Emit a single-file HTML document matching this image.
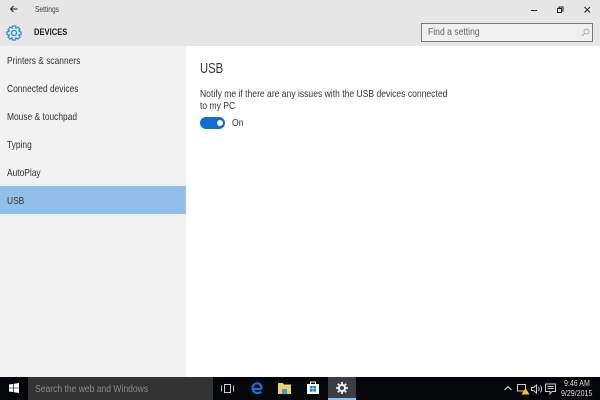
<!DOCTYPE html>
<html><head><meta charset="utf-8"><style>
html,body{margin:0;padding:0;width:600px;height:400px;overflow:hidden;background:#fff;font-family:"Liberation Sans",sans-serif}
.a{position:absolute;white-space:nowrap;line-height:12px;transform-origin:0 50%}
.n{font-size:10.5px;color:#333;left:6.5px;transform:scaleX(.8)}
.d{font-size:10.5px;color:#333;left:200px;transform:scaleX(.815)}
svg{position:absolute;overflow:visible}
</style></head><body>
<div class="a" style="left:0;top:0;width:600px;height:46px;background:#e6e6e6"></div>
<div class="a" style="left:0;top:46px;width:186px;height:331px;background:#f2f2f2"></div>
<div class="a" style="left:0;top:186px;width:186px;height:28px;background:#92c0e8"></div>
<svg style="left:10px;top:4px" width="12" height="10" fill="none" stroke="#222" stroke-width="1"><path d="M.5 5H7.500M.5 5L3.500 2M.5 5L3.500 8"/></svg>
<div class="a" style="left:35px;top:3px;font-size:8.5px;color:#444;transform:scaleX(.78)">Settings</div>
<svg style="left:6px;top:25px" width="16" height="16" viewBox="0 0 16 16" fill="none" stroke="#2b8fdc" stroke-width="1.300"><circle cx="8" cy="8" r="2.500"/><path d="M6.500 1H9.500L10 3L12 2.200L14 4.500L12.800 6L15 7V9.500L12.800 10L14 12L12 14L10 13L9.500 15H6.500L6 13L4 14L2 12L3.200 10L1 9.500V7L3.200 6L2 4.500L4 2.200L6 3Z"/></svg>
<div class="a" style="left:34px;top:27px;font-size:9.500px;font-weight:bold;color:#222;transform:scaleX(.8)">DEVICES</div>
<svg style="left:530px;top:4px" width="64" height="12" fill="none" stroke="#222" stroke-width="1"><path d="M1 6.500H7"/><path d="M27.500 4.500H31.500V8.500H27.500ZM29 4.500V3H33V7H31.500"/><path d="M54.500 3L60 8.500M60 3L54.500 8.500"/></svg>
<div class="a" style="left:421px;top:23px;width:170px;height:17px;background:#f0f0f0;border:1px solid #7a7a7a"></div>
<div class="a" style="left:428px;top:27px;font-size:10px;color:#666;transform:scaleX(.86)">Find a setting</div>
<svg style="left:581px;top:28px" width="9" height="9" fill="none" stroke="#aaa" stroke-width=".9"><circle cx="5.500" cy="3.500" r="2.500"/><path d="M3.700 5.300L1 8"/></svg>
<div class="a n" style="top:55px">Printers &amp; scanners</div>
<div class="a n" style="top:83px">Connected devices</div>
<div class="a n" style="top:111px">Mouse &amp; touchpad</div>
<div class="a n" style="top:139px">Typing</div>
<div class="a n" style="top:167px">AutoPlay</div>
<div class="a n" style="top:195px">USB</div>
<div class="a" style="left:200px;top:61px;font-size:15px;line-height:16px;color:#333;transform:scaleX(.75)">USB</div>
<div class="a d" style="top:88px">Notify me if there are any issues with the USB devices connected</div>
<div class="a d" style="top:100px">to my PC</div>
<div class="a" style="left:200px;top:117px;width:25px;height:12px;border-radius:6px;background:#0f6fcf"></div>
<div class="a" style="left:217px;top:120px;width:6px;height:6px;border-radius:3px;background:#fff"></div>
<div class="a" style="left:232px;top:117px;font-size:10.500px;color:#333;transform:scaleX(.82)">On</div>
<div class="a" style="left:0;top:377px;width:600px;height:23px;background:#05060a"></div>
<div class="a" style="left:28px;top:377px;width:185px;height:23px;background:#333"></div>
<svg style="left:9px;top:383px" width="10" height="10" fill="#fff"><path d="M0 1.500L4.300 .9V4.700H0ZM5 .8L10 0V4.700H5ZM0 5.300H4.300V9.100L0 8.500ZM5 5.300H10V10L5 9.200Z"/></svg>
<div class="a" style="left:35px;top:384px;font-size:10px;color:#8a8a8a;transform:scaleX(.855)">Search the web and Windows</div>
<svg style="left:221px;top:384px" width="13" height="9" fill="none" stroke="#ccc" stroke-width="1"><path d="M3.500 .5H9.500V8.500H3.500ZM1 2H.5V7H1M12 2H12.500V7H12"/></svg>
<svg style="left:251px;top:382px" width="12" height="12" fill="none" stroke="#0f78d4" stroke-width="2.200"><path d="M10.500 7H1.500C1.500 3.500 3.500 1.300 6 1.300C8.800 1.300 10.500 3.200 10.500 7M2 7C2 9.500 4 11 6.500 11C8 11 9.300 10.500 10.300 9.800"/></svg>
<svg style="left:278px;top:382px" width="13" height="13"><path d="M0 1H5L6 2.500H13V12H0Z" fill="#f0cf70"/><path d="M4 7H9V12H4Z" fill="#2aa5dc"/></svg>
<svg style="left:307px;top:381px" width="12" height="14"><path d="M0 3H12V13H0Z" fill="#fff"/><path d="M3.500 3V1H8.500V3" fill="none" stroke="#fff"/><path d="M3 5H5.700V7.500H3ZM6.300 5H9V7.500H6.300ZM3 8.100H5.700V10.600H3ZM6.300 8.100H9V10.600H6.300Z" fill="#0f78d4"/></svg>
<div class="a" style="left:328px;top:377px;width:28px;height:23px;background:#3a3d42"></div>
<div class="a" style="left:328px;top:398px;width:28px;height:2px;background:#8fc0e8"></div>
<svg style="left:336px;top:382px" width="12" height="12" viewBox="0 0 12 12" fill="none" stroke="#f4f4f4" stroke-width="2"><circle cx="6" cy="6" r="3"/><path d="M6 0V2M6 10V12M0 6H2M10 6H12M1.800 1.800L3.200 3.200M8.800 8.800L10.200 10.200M10.200 1.800L8.800 3.200M3.200 8.800L1.800 10.200" stroke-width="1.800"/></svg>
<svg style="left:504px;top:385px" width="9" height="6" fill="none" stroke="#ddd" stroke-width="1"><path d="M.5 5L4 1.500L7.500 5"/></svg>
<svg style="left:517px;top:384px" width="13" height="11"><path d="M.5 .5H8.500V7H.5Z" fill="none" stroke="#ccc"/><path d="M8.500 4L12.500 10.500H4.500Z" fill="#f5c518"/></svg>
<svg style="left:531px;top:384px" width="12" height="10" fill="none" stroke="#ccc" stroke-width="1"><path d="M.5 3.500H2.500L5.500 1V9L2.500 6.500H.5Z"/><path d="M7.500 3C8.300 4 8.300 6 7.500 7M9.500 1.500C11 3.500 11 6.500 9.500 8.500"/></svg>
<svg style="left:545px;top:383px" width="12" height="12" fill="none" stroke="#ccc" stroke-width="1"><path d="M.5 1H10.500V8.500H7L5 11V8.500H.5ZM2.500 3.500H8.500M2.500 5.500H8.500"/></svg>
<div class="a" style="left:564px;top:378px;font-size:8.500px;line-height:11px;color:#ddd;transform:scaleX(.83)">9:46 AM</div>
<div class="a" style="left:561px;top:388px;font-size:8.500px;line-height:11px;color:#ddd;transform:scaleX(.83)">9/29/2015</div>
</body></html>
